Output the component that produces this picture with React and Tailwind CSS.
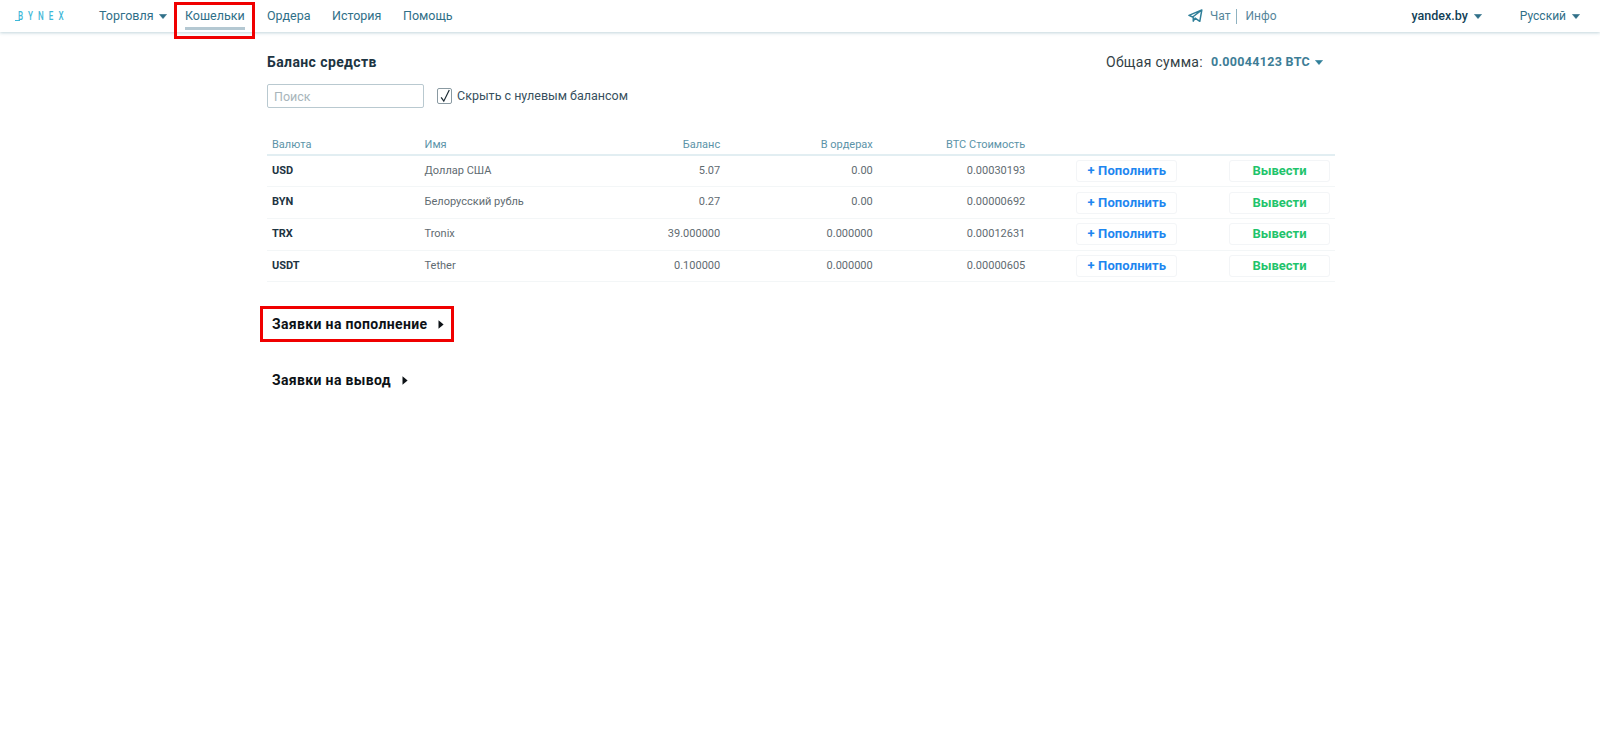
const rows = [
  ["USD", "Доллар США", "5.07", "0.00", "0.00030193"],
  ["BYN", "Белорусский рубль", "0.27", "0.00", "0.00000692"],
  ["TRX", "Tronix", "39.000000", "0.000000", "0.00012631"],
  ["USDT", "Tether", "0.100000", "0.000000", "0.00000605"],
];

const Caret = ({ className = "" }) => (
  <svg viewBox="0 0 8 5" className={`w-[8px] h-[5px] fill-current ${className}`}>
    <path d="M0.2 0.2H7.8L4 4.8Z" stroke="currentColor" strokeWidth="0.3" strokeLinejoin="round" />
  </svg>
);

const CaretRight = ({ className = "" }) => (
  <svg viewBox="0 0 6 9" className={`w-[6px] h-[9px] fill-current ${className}`}>
    <path d="M0.5 0.3L5.6 4.5L0.5 8.7Z" />
  </svg>
);

const Plane = () => (
  <svg viewBox="0 0 16 15" className="w-[15px] h-[14px] text-[#2f7f99]" fill="none" stroke="currentColor" strokeWidth="1.6" strokeLinejoin="round">
    <path d="M14.8 1L1 6.8L5 8.6L14.8 1L12.6 13.2L7.6 9.8L5.6 13V8.8" />
  </svg>
);

export default function App() {
  return (
    <div className="min-h-[745px] bg-white font-['Roboto',sans-serif]">
      <header className="h-[32px] flex items-center bg-white shadow-[0_1px_3px_rgba(120,160,175,0.45)] text-[12.5px] text-[#2f6f88]">
        <div className="relative ml-[15px] w-[84px] shrink-0 h-[32px] flex items-center">
          <span className="absolute left-0 top-[20px] w-[5px] h-[1px] bg-[#3fb8d8]" />
          <span className="ml-[3px] inline-block origin-left scale-x-[0.62] font-medium text-[#3fb8d8] text-[13px] tracking-[8.2px] whitespace-nowrap">BYNEX</span>
        </div>
        <nav className="flex items-center">
          <div className="flex items-center gap-[5px] w-[86px]">
            <span>Торговля</span>
            <Caret />
          </div>
          <div className="relative w-[82px] h-[32px] flex items-center">
            <span className="relative">
              Кошельки
              <span className="absolute left-0 right-0 top-[20px] h-[3px] bg-[#b4c8d2]" />
            </span>
            <span className="absolute left-[-11px] top-[2px] w-[81px] h-[37px] border-[3px] border-[#f00000]" />
          </div>
          <span className="w-[65px]">Ордера</span>
          <span className="w-[71px]">История</span>
          <span>Помощь</span>
        </nav>
        <div className="ml-auto flex items-center mr-[20px] text-[12px]">
          <Plane />
          <span className="ml-[7px] text-[#55859a]">Чат</span>
          <span className="ml-[6px] mr-[8px] w-px h-[15px] bg-[#8fb2c0]" />
          <span className="text-[#55859a]">Инфо</span>
          <span className="ml-[135px] font-medium text-[#123f57] text-[12.5px]">yandex.by</span>
          <Caret className="ml-[6px]" />
          <span className="ml-[38px]">Русский</span>
          <Caret className="ml-[6px]" />
        </div>
      </header>

      <main className="w-[1068px] ml-[267px]">
        <div className="flex items-center justify-between pt-[20px] pr-[12px]">
          <h1 className="text-[14px] font-bold text-[#1d3442] leading-[20px] tracking-[0.4px]">Баланс средств</h1>
          <div className="flex items-center text-[14px] leading-[20px] text-[#333f46] tracking-[0.3px]">
            <span>Общая сумма:</span>
            <span className="ml-[8px] font-bold text-[#3d7d96] text-[12.5px]">0.00044123 BTC</span>
            <Caret className="ml-[5px] text-[#2f7f99]" />
          </div>
        </div>

        <div className="flex items-center mt-[12px]">
          <input
            placeholder="Поиск"
            readOnly
            className="w-[157px] h-[24px] px-[6px] border border-[#b9c9d0] rounded-[2px] text-[12.5px] placeholder:text-[#a8b5bb] outline-none"
          />
          <span className="ml-[13px] w-[15px] h-[16px] border border-[#8a9aa2] rounded-[2px] flex items-center justify-center">
            <svg viewBox="0 0 14 16" className="w-[12px] h-[14px]" fill="none" stroke="#1b2a33" strokeWidth="1.4">
              <path d="M2.5 9.5L5.6 14L12 1" />
            </svg>
          </span>
          <span className="ml-[5px] text-[12.5px] text-[#37505e]">Скрыть с нулевым балансом</span>
        </div>

        <table className="w-[1068px] table-fixed mt-[27px] border-collapse text-[11px]">
          <thead>
            <tr className="h-[20px] border-b-2 border-[#e2eef2] text-[#5b93a8]">
              <th className="font-normal text-left pl-[5px] pt-[2px]">Валюта</th>
              <th className="font-normal text-left pl-[5px] pt-[2px]">Имя</th>
              <th className="font-normal text-right pr-[4.5px] pt-[2px]">Баланс</th>
              <th className="font-normal text-right pr-[4.5px] pt-[2px]">В ордерах</th>
              <th className="font-normal text-right pr-[4.5px] pt-[2px]">BTC Стоимость</th>
              <th />
              <th />
            </tr>
          </thead>
          <tbody>
            {rows.map((r) => (
              <tr key={r[0]} className="h-[31.7px] border-b border-[#f3f6f7] text-[#5f6b71]">
                <td className="pl-[5px] font-bold text-[#1d3442]">{r[0]}</td>
                <td className="pl-[5px]">{r[1]}</td>
                <td className="pr-[4.5px] text-right">{r[2]}</td>
                <td className="pr-[4.5px] text-right">{r[3]}</td>
                <td className="pr-[4.5px] text-right">{r[4]}</td>
                <td className="pr-[5px] text-right">
                  <button className="block ml-auto w-[101px] h-[22px] border border-[#f3f5f7] rounded-[3px] text-[13px] font-bold text-[#1e86f0] tracking-[0.1px]">
                    + Пополнить
                  </button>
                </td>
                <td className="pr-[5px] text-right">
                  <button className="block ml-auto w-[101px] h-[22px] border border-[#f3f5f7] rounded-[3px] text-[13px] font-bold text-[#1fc46c]">
                    Вывести
                  </button>
                </td>
              </tr>
            ))}
          </tbody>
        </table>

        <div className="mt-[24px] -ml-[7px] w-[194px] h-[36px] border-[3px] border-[#f00000] flex items-center pl-[9px] text-[14px] font-bold text-[#0d1216] tracking-[0.35px]">
          <span>Заявки на пополнение</span>
          <CaretRight className="ml-[11px]" />
        </div>

        <div className="mt-[28px] pl-[5px] flex items-center h-[20px] text-[14px] font-bold text-[#0d1216] tracking-[0.35px]">
          <span>Заявки на вывод</span>
          <CaretRight className="ml-[11px]" />
        </div>
      </main>
    </div>
  );
}
